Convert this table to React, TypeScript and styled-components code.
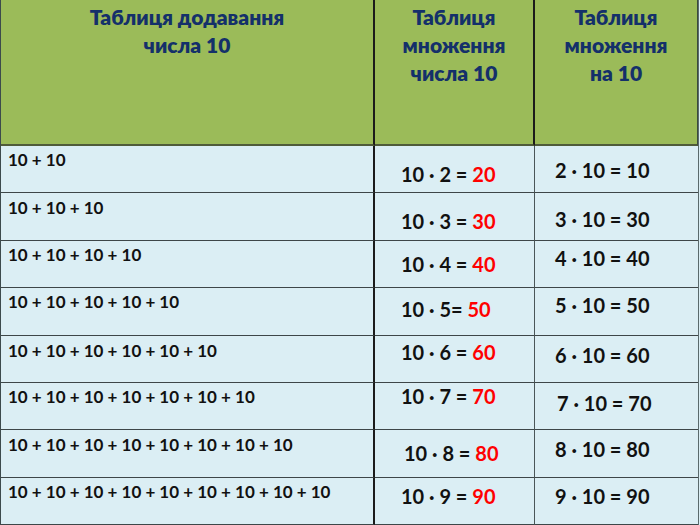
import React from "react";
import styled, { createGlobalStyle } from "styled-components";

const Global = createGlobalStyle`
  html, body { margin: 0; padding: 0; background: #dbeef4; }
  body { font-family: Lato, "Open Sans", sans-serif; }
`;

const Table = styled.div`
  width: 699px;
  height: 525px;
  display: grid;
  grid-template-columns: 374px 160px 1fr;
  grid-template-rows: 146px repeat(8, 1fr);
  background: #dbeef4;
  border-left: 1px solid #3c4a4c;
  border-right: 1px solid #5a6a6c;
  box-sizing: border-box;
`;

const HeadCell = styled.div<{ $first?: boolean }>`
  background: #9bbb59;
  color: #14306a;
  font-weight: 800;
  font-size: 21px;
  line-height: 28px;
  text-align: center;
  padding-top: 3px;
  box-sizing: border-box;
  border-bottom: 2px solid #4f5b3a;
  border-right: ${(p) => (p.$first ? "2px solid #1b1b1b" : "1px solid #3b4a3e")};
`;

const Cell = styled.div<{ $col: number; $top: number; $left: number }>`
  box-sizing: border-box;
  border-bottom: 1px solid #3d4648;
  border-right: ${(p) =>
    p.$col === 0 ? "2px solid #1b1b1b" : p.$col === 1 ? "1px solid #4a5658" : "none"};
  padding-top: ${(p) => p.$top}px;
  padding-left: ${(p) => p.$left}px;
  color: #111;
  font-weight: 700;
  white-space: nowrap;
  font-size: ${(p) => (p.$col === 0 ? 17 : 20)}px;
  line-height: 24px;
`;

const Red = styled.span`
  color: #ff0000;
`;

type Row = { sum: string; mul: [string, string]; rev: string; t: [number, number, number]; l2?: number; l3?: number };

const rows: Row[] = [
  { sum: "10 + 10", mul: ["10 ∙ 2 = ", "20"], rev: "2 ∙ 10 = 10", t: [2, 16, 12] },
  { sum: "10 + 10 + 10", mul: ["10 ∙ 3 = ", "30"], rev: "3 ∙ 10 = 30", t: [3, 16, 14] },
  { sum: "10 + 10 + 10 + 10", mul: ["10 ∙ 4 = ", "40"], rev: "4 ∙ 10 = 40", t: [2, 11, 5] },
  { sum: "10 + 10 + 10 + 10 + 10", mul: ["10 ∙ 5= ", "50"], rev: "5 ∙ 10 = 50", t: [2, 9, 5] },
  { sum: "10 + 10 + 10 + 10 + 10 + 10", mul: ["10 ∙ 6 = ", "60"], rev: "6 ∙ 10 = 60", t: [3, 4, 7] },
  { sum: "10 + 10 + 10 + 10 + 10 + 10 + 10", mul: ["10 ∙ 7 = ", "70"], rev: "7 ∙ 10 = 70", t: [2, 1, 8], l3: 22 },
  { sum: "10 + 10 + 10 + 10 + 10 + 10 + 10 + 10", mul: ["10 ∙ 8 = ", "80"], rev: "8 ∙ 10 = 80", t: [3, 11, 7], l2: 29 },
  { sum: "10 + 10 + 10 + 10 + 10 + 10 + 10 + 10 + 10", mul: ["10 ∙ 9 = ", "90"], rev: "9 ∙ 10 = 90", t: [2, 6, 6] },
];

export default function App() {
  return (
    <>
      <Global />
      <Table>
        <HeadCell $first>
          Таблиця додавання
          <br />
          числа 10
        </HeadCell>
        <HeadCell $first>
          Таблиця
          <br />
          множення
          <br />
          числа 10
        </HeadCell>
        <HeadCell>
          Таблиця
          <br />
          множення
          <br />
          на 10
        </HeadCell>
        {rows.map((r, i) => (
          <React.Fragment key={i}>
            <Cell $col={0} $top={r.t[0]} $left={7}>
              {r.sum}
            </Cell>
            <Cell $col={1} $top={r.t[1]} $left={r.l2 ?? 26}>
              {r.mul[0]}
              <Red>{r.mul[1]}</Red>
            </Cell>
            <Cell $col={2} $top={r.t[2]} $left={r.l3 ?? 20}>
              {r.rev}
            </Cell>
          </React.Fragment>
        ))}
      </Table>
    </>
  );
}
